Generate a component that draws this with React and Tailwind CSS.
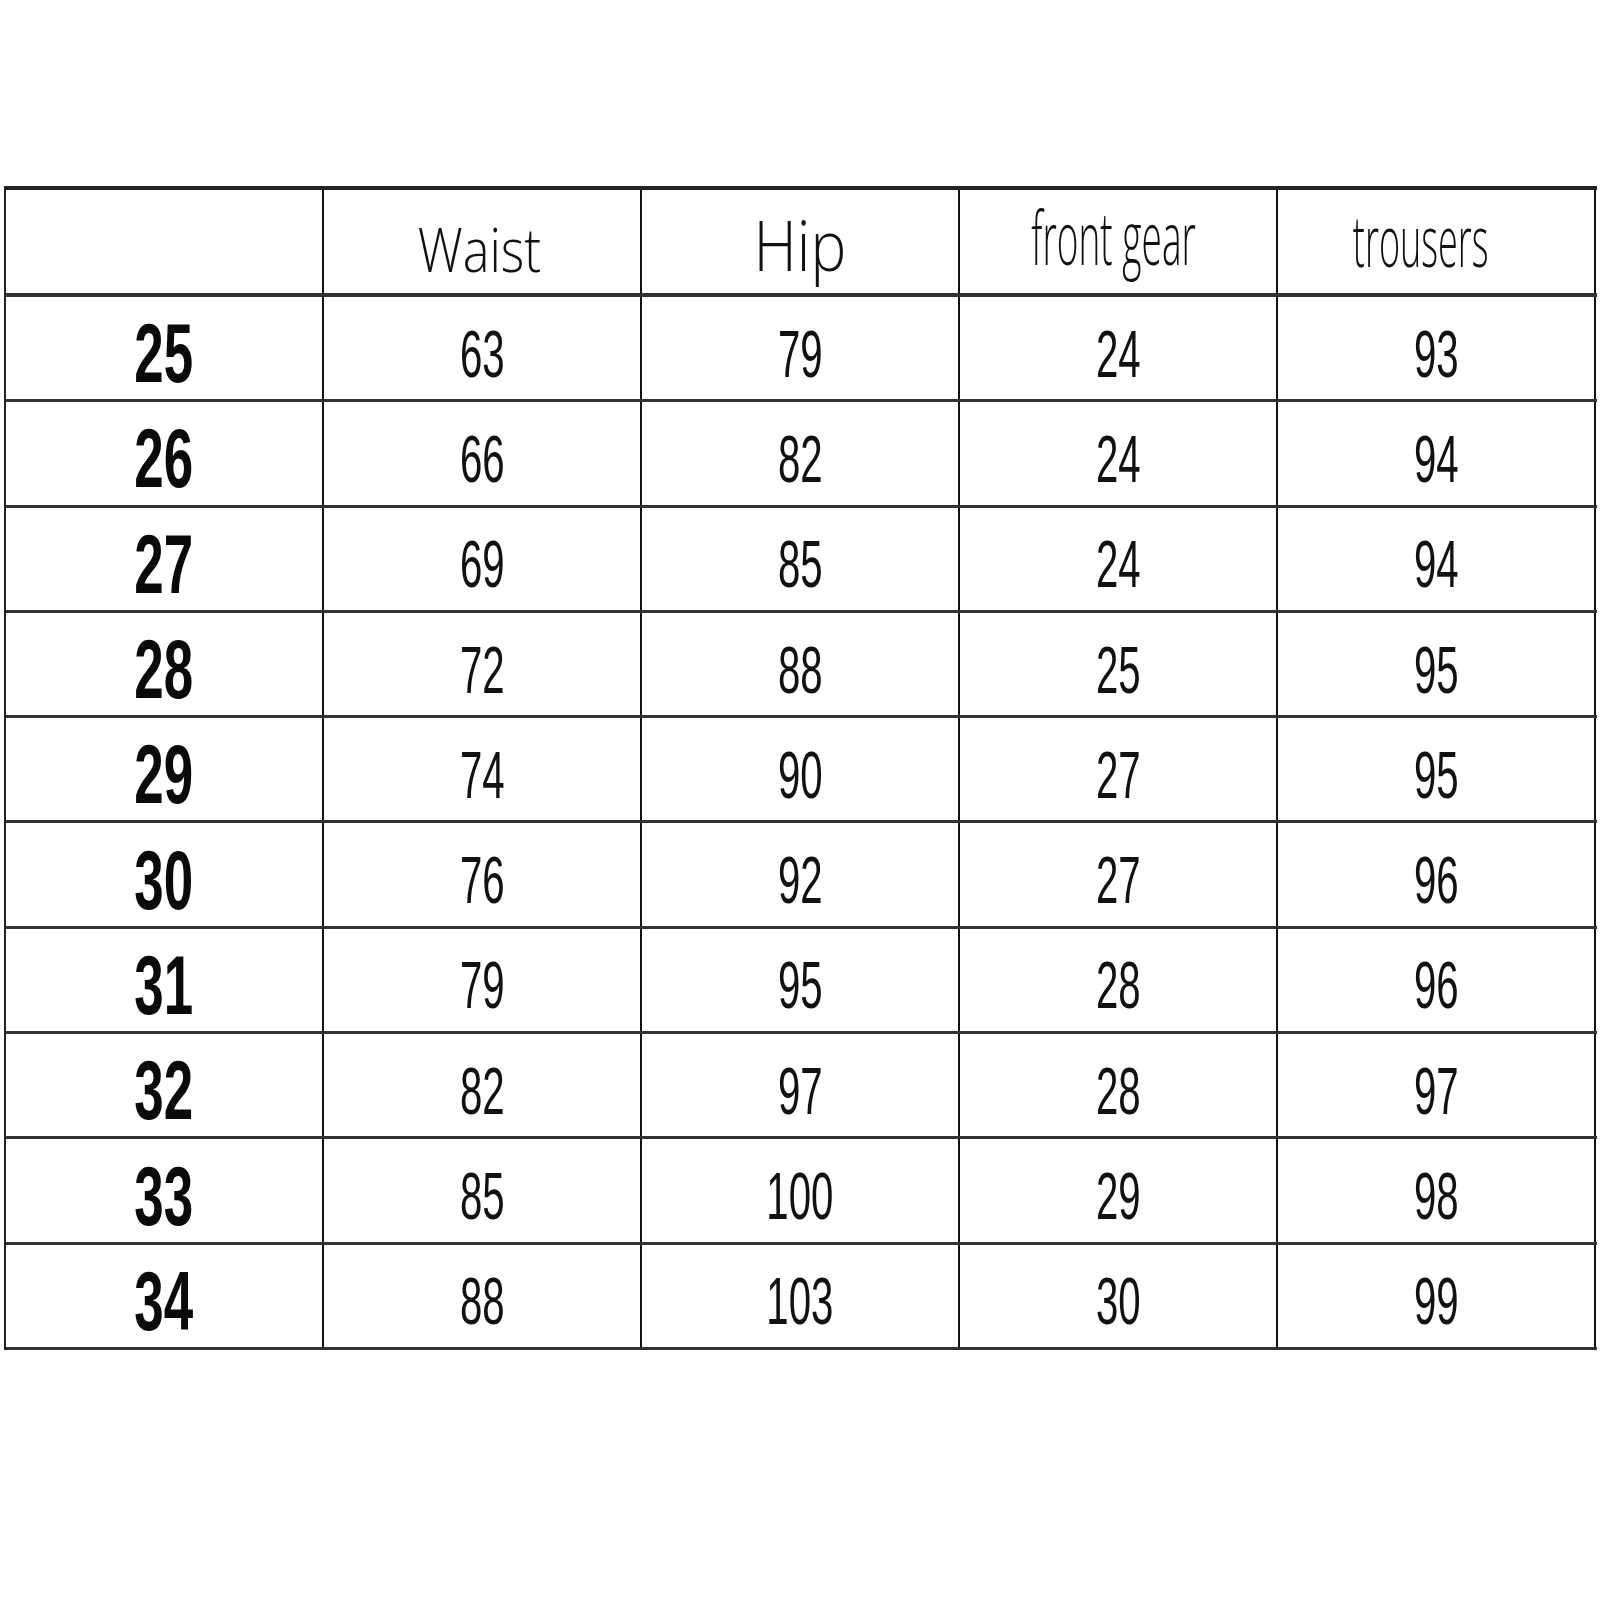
const headers = ['Waist', 'Hip', 'front gear', 'trousers']

const rows = [
  ['25', '63', '79', '24', '93'],
  ['26', '66', '82', '24', '94'],
  ['27', '69', '85', '24', '94'],
  ['28', '72', '88', '25', '95'],
  ['29', '74', '90', '27', '95'],
  ['30', '76', '92', '27', '96'],
  ['31', '79', '95', '28', '96'],
  ['32', '82', '97', '28', '97'],
  ['33', '85', '100', '29', '98'],
  ['34', '88', '103', '30', '99'],
]

// header labels: each one has its own size / squeeze in the picture
const headStyles = [
  'text-[60px] scale-x-[0.84] pt-[14px] mr-[6px]',
  'text-[70px] scale-x-[0.86] pt-[4px]',
  'text-[74px] scale-x-[0.5] -mt-[10px] mr-[8px]',
  'text-[72px] scale-x-[0.5] -mt-[6px] mr-[30px]',
]

export default function App() {
  return (
    <div className="w-full h-[1601px] bg-white pt-[186px] pl-[4px] pr-[4px]">
      <div className="w-[1593px] border-t-[4px] border-l-2 border-[#222]">
        <div className="flex h-[107px] border-b-[4px] border-[#333]">
          <div className="w-[318px] border-r-2 border-[#111]" />
          {headers.map((h, i) => (
            <div key={h} className="w-[318px] border-r-2 border-[#111] flex items-center justify-center">
              <span
                className={`inline-block font-light text-[#111] leading-none whitespace-nowrap ${headStyles[i]}`}
                style={{ fontFamily: '"Open Sans", "Noto Sans", sans-serif' }}
              >
                {h}
              </span>
            </div>
          ))}
        </div>
        {rows.map((r) => (
          <div key={r[0]} className="flex h-[105.3px] border-b-[3px] border-[#333]">
            {r.map((v, j) => (
              <div key={j} className="w-[318px] border-r-2 border-[#111] flex items-center justify-center pt-[10px]">
                {j === 0 ? (
                  <span
                    className="inline-block font-bold text-[84px] leading-none scale-x-[0.63] text-[#0a0a0a]"
                    style={{ fontFamily: '"Liberation Sans", Arial, sans-serif' }}
                  >
                    {v}
                  </span>
                ) : (
                  <span
                    className="inline-block text-[67px] leading-none scale-x-[0.6] text-[#111]"
                    style={{ fontFamily: '"Liberation Sans", Arial, sans-serif' }}
                  >
                    {v}
                  </span>
                )}
              </div>
            ))}
          </div>
        ))}
      </div>
    </div>
  )
}
